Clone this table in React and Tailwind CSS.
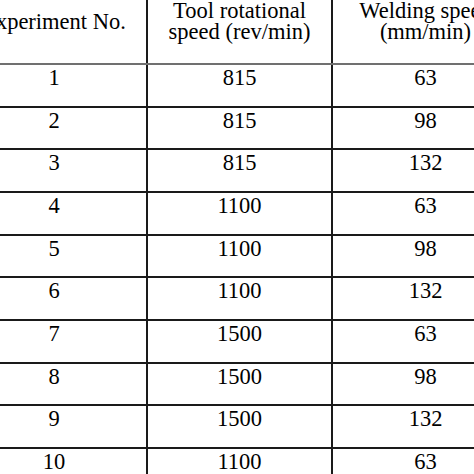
const HEADERS = [
  ['Experiment No.'],
  ['Tool rotational', 'speed (rev/min)'],
  ['Welding speed', '(mm/min)'],
];

const ROWS = [
  ['1', '815', '63'],
  ['2', '815', '98'],
  ['3', '815', '132'],
  ['4', '1100', '63'],
  ['5', '1100', '98'],
  ['6', '1100', '132'],
  ['7', '1500', '63'],
  ['8', '1500', '98'],
  ['9', '1500', '132'],
  ['10', '1100', '63'],
];

// column widths incl. the 2px right rule
const COLS = ['w-[186px] border-r-2', 'w-[185px] border-r-2', 'w-[185px]'];

export default function App() {
  return (
    <div
      className="w-[474px] h-[474px] overflow-hidden bg-white text-black text-[22.5px]"
      style={{ fontFamily: '"Liberation Serif", "Times New Roman", serif' }}
    >
      <div className="ml-[-38px] w-[556px]">
        <div className="flex h-[65px] border-b-2 border-[#707070]">
          {HEADERS.map((lines, i) => (
            <div
              key={i}
              className={`${COLS[i]} border-[#1a1a1a] flex flex-col items-center justify-center pb-[21px] leading-[21px] whitespace-nowrap`}
            >
              {lines.map((l) => (
                <span key={l}>{l}</span>
              ))}
            </div>
          ))}
        </div>
        {ROWS.map((row, r) => (
          <div key={r} className="flex h-[42.67px] border-b-2 border-[#1a1a1a]">
            {row.map((v, i) => (
              <div
                key={i}
                className={`${COLS[i]} border-[#1a1a1a] text-center leading-[26px]`}
              >
                {v}
              </div>
            ))}
          </div>
        ))}
      </div>
    </div>
  );
}
